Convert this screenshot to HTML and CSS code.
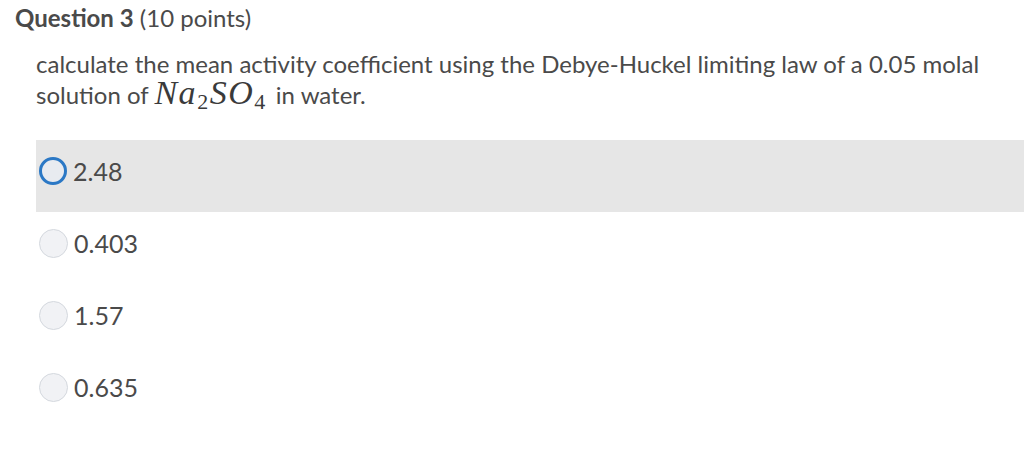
FILE: index.html
```html
<!DOCTYPE html>
<html>
<head>
<meta charset="utf-8">
<link rel="stylesheet" href="styles.css">
</head>
<body>
<div class="quiz">
  <h2 class="qhead"><span class="qnum">Question 3</span> (10 points)</h2>
  <div class="qtext">
    <p>calculate the mean activity coefficient using the Debye-Huckel limiting law of a 0.05 molal solution of <span class="math"><i>Na</i><sub>2</sub><i>SO</i><sub>4</sub></span> in water.</p>
  </div>
  <ul class="answers">
    <li class="answer selected"><span class="radio"></span><span class="label">2.48</span></li>
    <li class="answer"><span class="radio"></span><span class="label">0.403</span></li>
    <li class="answer"><span class="radio"></span><span class="label">1.57</span></li>
    <li class="answer"><span class="radio"></span><span class="label">0.635</span></li>
  </ul>
</div>
</body>
</html>
```
FILE: styles.css
```css
html, body {
  margin: 0;
  padding: 0;
  background: #ffffff;
}
body {
  width: 1024px;
  height: 458px;
  overflow: hidden;
  font-family: Lato, "Liberation Sans", sans-serif;
  color: #4a4a4a;
}
.qhead {
  margin: 0;
  padding: 2px 0 0 15px;
  font-size: 24px;
  font-weight: normal;
  line-height: 32px;
  color: #4a4a4a;
}
.qnum {
  font-weight: bold;
}
.qtext {
  padding: 15px 20px 0 36px;
}
.qtext p {
  margin: 0;
  font-size: 24px;
  line-height: 29px;
}
.math {
  font-family: "Liberation Serif", "DejaVu Serif", serif;
  font-size: 34px;
  line-height: 29px;
  letter-spacing: 1.5px;
  color: #3a3a3a;
  margin-right: 3px;
}
.math i {
  font-style: italic;
}
.math sub {
  font-family: "Liberation Serif", serif;
  font-style: normal;
  font-size: 22px;
  vertical-align: -5px;
  line-height: 0;
}
.answers {
  list-style: none;
  margin: 0;
  padding: 0;
  margin-top: 31px;
  margin-left: 36px;
}
.answer {
  height: 72px;
  display: flex;
  align-items: flex-start;
  padding-top: 17px;
  box-sizing: border-box;
}
.answer.selected {
  background: #e6e6e6;
}
.radio {
  width: 29px;
  height: 29px;
  box-sizing: border-box;
  border-radius: 50%;
  border: 1px solid #d4d8de;
  background: #f1f2f5;
  margin-left: 3px;
  flex: none;
}
.answer.selected .radio {
  border: 3px solid #2b78c5;
  background: #e8ebf0;
  width: 28px;
  height: 28px;
}
.label {
  font-size: 25px;
  line-height: 29px;
  margin-left: 6px;
  color: #4a4a4a;
}
```
